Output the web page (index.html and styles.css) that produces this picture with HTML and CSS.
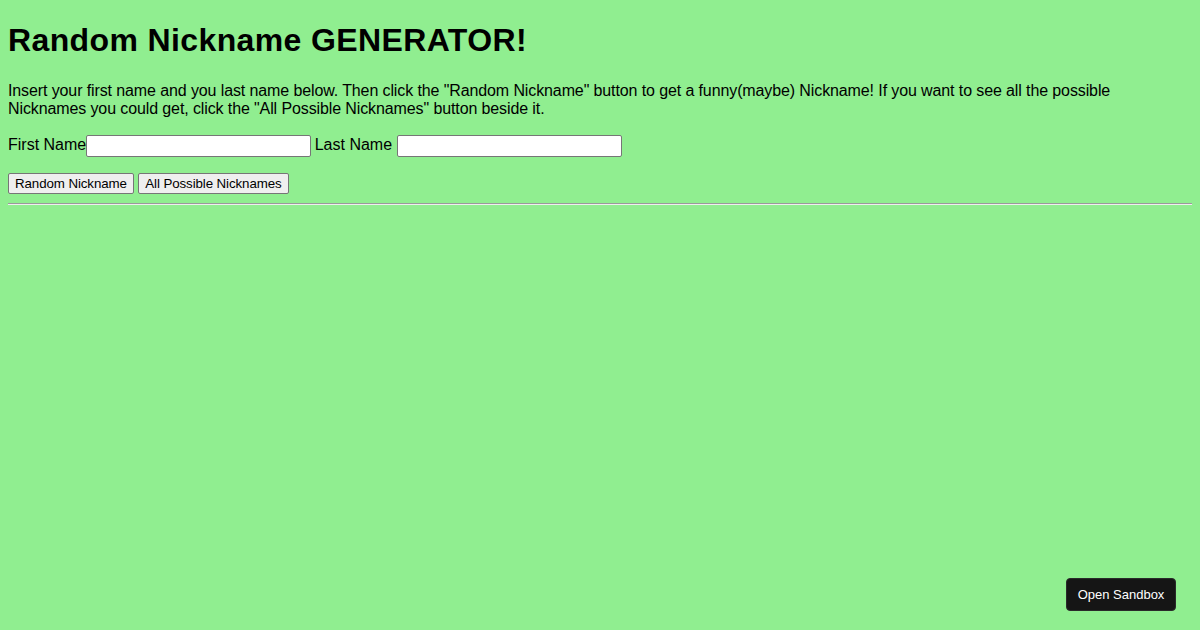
FILE: index.html
```html
<!DOCTYPE html>
<html>
<head>
<meta charset="utf-8">
<title>Random Nickname Generator</title>
<link rel="stylesheet" href="styles.css">
</head>
<body>
<h1 class="title">Random Nickname GENERATOR!</h1>
<p class="intro">Insert your first name and you last name below. Then click the "Random Nickname" button to get a funny(maybe) Nickname! If you want to see all the possible Nicknames you could get, click the "All Possible Nicknames" button beside it.</p>
<p class="fields"><label>First Name</label><input class="field" type="text"> <label>Last Name</label> <input class="field" type="text"></p>
<div class="actions"><button class="btn">Random Nickname</button> <button class="btn">All Possible Nicknames</button></div>
<hr class="rule">
<a class="sandbox">Open Sandbox</a>
</body>
</html>
```
FILE: styles.css
```css
html, body {
  background: #90ee90;
}
body {
  margin: 8px;
  font-family: "Liberation Sans", Arial, sans-serif;
  font-size: 16px;
  color: #000;
}
.title {
  font-size: 32px;
  font-weight: bold;
  letter-spacing: 0.38px;
  margin: 14px 0 21.44px;
}
.intro {
  margin: 22.5px 0 16px;
  line-height: 18.4px;
  letter-spacing: -0.11px;
}
.fields {
  margin: 16px 0;
  line-height: 22px;
  letter-spacing: 0;
}
.field {
  box-sizing: border-box;
  width: 225px;
  height: 22px;
  border: 1px solid #767676;
  border-radius: 2px;
  padding: 1px 2px;
  background: #fff;
  vertical-align: middle;
  font-family: "Liberation Sans", Arial, sans-serif;
  font-size: 13.33px;
}
.field + label {
  margin-left: -1px;
}
.actions {
  line-height: 21px;
}
.btn {
  box-sizing: border-box;
  height: 21px;
  font-family: "Liberation Sans", Arial, sans-serif;
  font-size: 13.33px;
  letter-spacing: -0.1px;
  color: #000;
  background: #efefef;
  border: 1px solid #767676;
  border-radius: 2px;
  padding: 1px 6px;
  margin: 0;
  vertical-align: top;
}
.rule {
  margin: 9px 0 8px;
  border: 0;
  border-top: 1px solid #9a9a9a;
  border-bottom: 1px solid #eee;
  height: 0;
}
.sandbox {
  position: fixed;
  right: 24px;
  bottom: 19px;
  width: 110px;
  height: 33px;
  box-sizing: border-box;
  display: flex;
  align-items: center;
  justify-content: center;
  background: #151515;
  border: 1px solid #2a2a2a;
  border-radius: 4px;
  color: #fff;
  font-family: "Liberation Sans", Arial, sans-serif;
  font-size: 13px;
}
```
